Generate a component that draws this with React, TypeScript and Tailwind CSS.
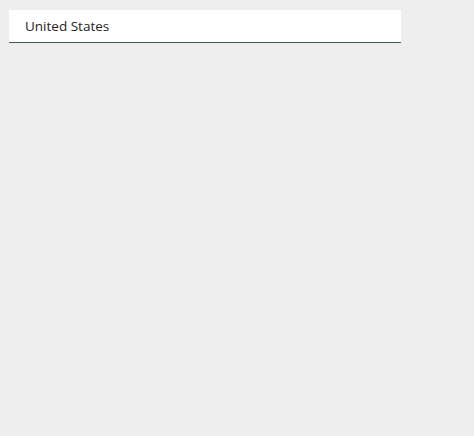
export default function App() {
  return (
    <div className="w-[474px] h-[436px] bg-[#eeeeee] pt-[10px] pl-[9px]" style={{ fontFamily: '"Open Sans", "Noto Sans", sans-serif' }}>
      <div className="w-[392px] h-[33px] bg-white border-b-[1.5px] border-[#3f5b5b] flex items-center pl-[16px] pt-[2px]">
        <span className="text-[13.5px] text-[#242424] leading-none">United States</span>
      </div>
    </div>
  );
}
